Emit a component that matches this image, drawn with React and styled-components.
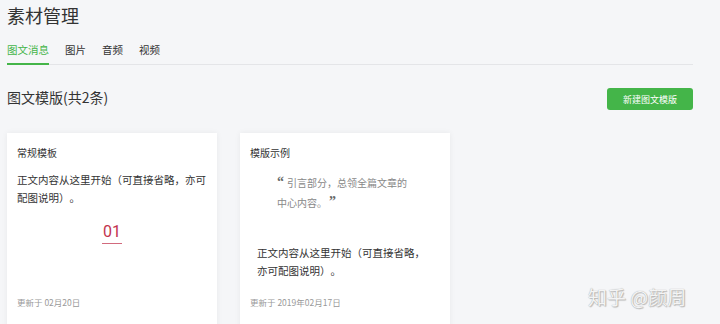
import styled, { createGlobalStyle } from "styled-components";

const GlobalStyle = createGlobalStyle`
  html, body {
    margin: 0;
    padding: 0;
    background: #f5f6f8;
    font-family: "Noto Sans CJK SC", "Noto Sans", sans-serif;
    text-spacing-trim: space-all;
  }
`;

const Page = styled.div`
  height: 324px;
  overflow: hidden;
  position: relative;
  padding: 0 27px 0 7px;
`;
const Title = styled.h1`
  margin: 0;
  padding-top: 3px;
  font-size: 18px;
  line-height: 24px;
  font-weight: 400;
  color: #333;
`;
const Tabs = styled.div`
  display: flex;
  gap: 16px;
  margin-top: 15px;
  border-bottom: 1px solid #e4e5e8;
`;
const Tab = styled.div`
  font-size: 10.5px;
  line-height: 16px;
  padding-bottom: 5px;
  color: ${(p) => (p.active ? "#44b549" : "#333")};
  border-bottom: 2px solid ${(p) => (p.active ? "#44b549" : "transparent")};
  margin-bottom: -1px;
`;
const SectionHead = styled.div`
  display: flex;
  align-items: center;
  justify-content: space-between;
  margin-top: 23px;
`;
const SectionTitle = styled.div`
  font-size: 14px;
  color: #333;
  line-height: 20px;
  margin-top: -4px;
`;
const NewButton = styled.button`
  width: 86px;
  height: 22px;
  border: none;
  border-radius: 3px;
  background: #44b549;
  color: #fff;
  font-family: inherit;
  font-size: 9px;
  padding: 0;
`;
const Cards = styled.div`
  display: flex;
  gap: 23px;
  margin-top: 23px;
`;
const Card = styled.div`
  width: 210px;
  height: 200px;
  background: #fff;
  box-shadow: 0 0 6px rgba(0, 0, 0, 0.06);
  padding: 12px 10px 0;
  box-sizing: border-box;
  display: flex;
  flex-direction: column;
`;
const CardTitle = styled.div`
  font-size: 10px;
  line-height: 16px;
  color: #333;
`;
const Body = styled.div`
  font-size: 10.5px;
  line-height: 18px;
  color: #333;
  margin-top: ${(p) => p.top}px;
  padding-left: ${(p) => p.indent || 0}px;
  padding-right: ${(p) => p.indent || 0}px;
`;
const Number = styled.div`
  align-self: center;
  margin-top: 15px;
  font-family: "Roboto", sans-serif;
  font-size: 16px;
  line-height: 20px;
  color: #c2334d;
  border-bottom: 1px solid #d26a7d;
  padding: 0 1px 1px;
`;
const Quote = styled.div`
  padding-left: 27px;
  margin-top: 12px;
`;
const QuoteLine = styled.div`
  display: flex;
  align-items: flex-start;
  font-size: 10px;
  line-height: 20px;
  color: #888;
`;
const Mark = styled.span`
  font-family: "Liberation Serif", serif;
  font-size: 14px;
  line-height: 14px;
  font-weight: 700;
  color: #666;
  margin: 2px ${(p) => (p.close ? 0 : 3)}px 0 ${(p) => (p.close ? 2 : 0)}px;
`;
const Updated = styled.div`
  margin-top: auto;
  margin-bottom: 25px;
  font-size: 8.5px;
  color: #999;
  line-height: 12px;
`;
const Watermark = styled.div`
  position: absolute;
  left: 588px;
  top: 283px;
  font-size: 19px;
  color: #f4f4f4;
  text-shadow: 0 0 1px #999, 1px 1px 1px #bbb;
`;

const App = () => {
  return (
    <Page>
      <GlobalStyle />
      <Title>素材管理</Title>
      <Tabs>
        <Tab active>图文消息</Tab>
        <Tab>图片</Tab>
        <Tab>音频</Tab>
        <Tab>视频</Tab>
      </Tabs>
      <SectionHead>
        <SectionTitle>图文模版(共2条)</SectionTitle>
        <NewButton>新建图文模版</NewButton>
      </SectionHead>
      <Cards>
        <Card>
          <CardTitle>常规模板</CardTitle>
          <Body top={10}>正文内容从这里开始（可直接省略，亦可配图说明）。</Body>
          <Number>01</Number>
          <Updated>更新于 02月20日</Updated>
        </Card>
        <Card>
          <CardTitle>模版示例</CardTitle>
          <Quote>
            <QuoteLine>
              <Mark>“</Mark>
              <span>引言部分，总领全篇文章的</span>
            </QuoteLine>
            <QuoteLine>
              <span>中心内容。</span>
              <Mark close>”</Mark>
            </QuoteLine>
          </Quote>
          <Body top={31} indent={7}>
            正文内容从这里开始（可直接省略，亦可配图说明）。
          </Body>
          <Updated>更新于 2019年02月17日</Updated>
        </Card>
      </Cards>
      <Watermark>知乎 @颜周</Watermark>
    </Page>
  );
};

export default App;
